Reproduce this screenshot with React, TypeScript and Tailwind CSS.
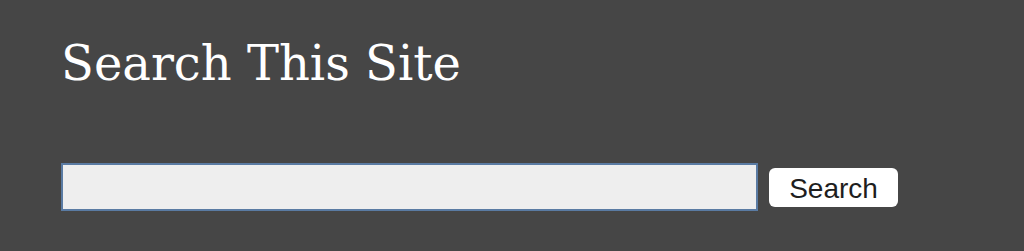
export default function App() {
  return (
    <main className="h-[251px] w-[1024px] bg-[#464646] pl-[61px] pt-[30px]">
      <h2 className="font-['DejaVu_Serif',serif] text-[48px] leading-[66px] text-white">
        Search This Site
      </h2>
      <form
        className="mt-[67px] flex items-center gap-[11px]"
        onSubmit={(e) => e.preventDefault()}
      >
        <input
          type="text"
          className="h-[48px] w-[697px] border-2 border-[#5a7ba3] bg-[#eeeeee] px-2 outline-none"
        />
        <button
          type="submit"
          className="h-[39px] w-[129px] rounded-[6px] bg-white font-['Liberation_Sans',sans-serif] text-[28px] text-[#1e1e1e]"
        >
          Search
        </button>
      </form>
    </main>
  );
}
